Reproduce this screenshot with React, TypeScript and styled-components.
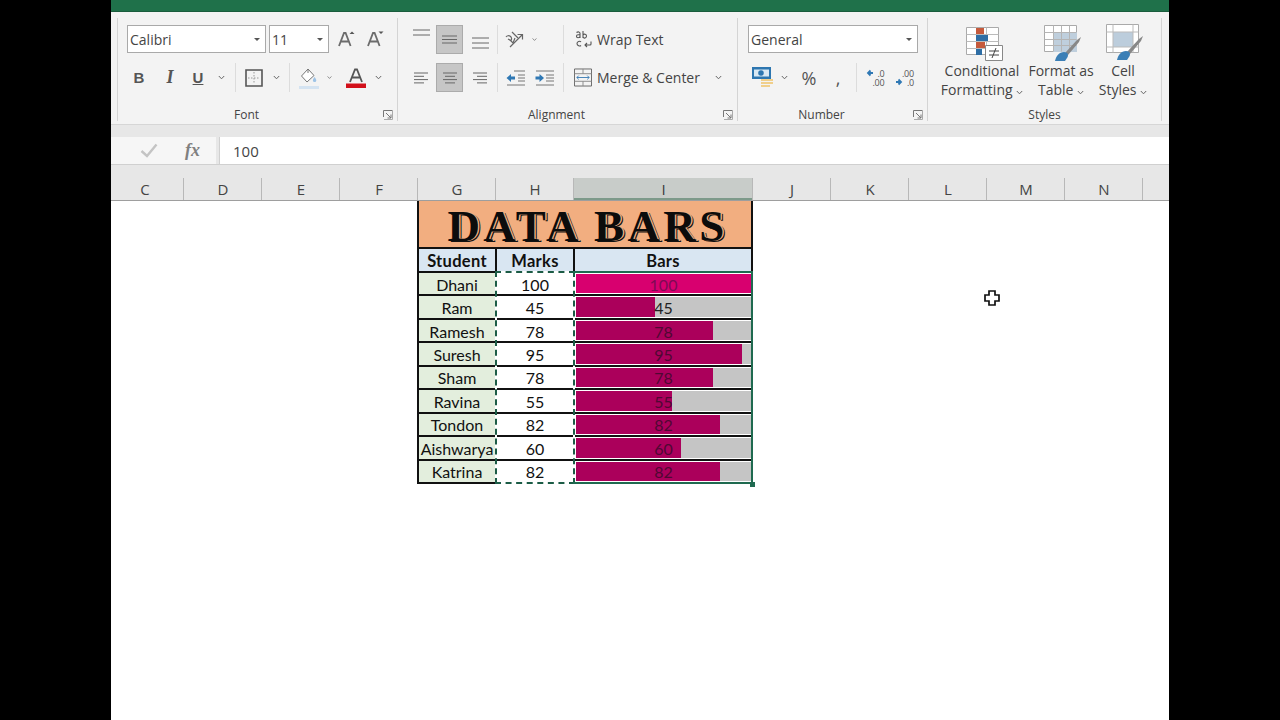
import React from "react";
import styled, { createGlobalStyle } from "styled-components";

const Global = createGlobalStyle`
  html, body { margin: 0; padding: 0; background: #000; overflow: hidden; }
  #root { width: 1280px; height: 720px; }
  * { box-sizing: border-box; }
`;
const Screen = styled.div`
  width: 1058px; height: 720px; margin-left: 111px; background: #fff;
  display: flex; flex-direction: column; overflow: hidden;
  font-family: "Open Sans", "Noto Sans", sans-serif; color: #444;
`;
const TitleBar = styled.div`
  height: 12px; flex: none; background: #1f714a; border-bottom: 1px solid #1a5c3d;
`;
const Ribbon = styled.div`
  height: 113px; flex: none; background: #f3f3f3; border-bottom: 1px solid #d6d6d6;
  display: flex; padding: 6px 0 3px 6px;
`;
const Group = styled.div<{ $w: number; $first?: boolean }>`
  width: ${(p) => p.$w}px; flex: none; display: flex; flex-direction: column;
  padding-top: 7px; border-right: 1px solid #d4d4d4;
  ${(p) => (p.$first ? "border-left: 1px solid #d4d4d4;" : "")}
`;
const Row = styled.div<{ $pl: number; $h?: number }>`
  display: flex; align-items: center; height: ${(p) => p.$h ?? 28}px;
  padding-left: ${(p) => p.$pl}px; margin-bottom: 10px;
`;
const Footer = styled.div`
  margin-top: auto; height: 14px; display: flex; align-items: center; padding-top: 1px;
`;
const GroupLabel = styled.div`
  flex: 1; text-align: center; font-size: 12px; line-height: 14px; color: #444;
`;
const Launcher = styled.div`
  width: 22px; flex: none; display: flex; justify-content: flex-end; padding-right: 4px;
`;
const Combo = styled.div<{ $w: number }>`
  width: ${(p) => p.$w}px; height: 28px; flex: none; margin-right: 3px; background: #fff;
  border: 1px solid #a9a9a9; display: flex; align-items: center; justify-content: space-between;
  padding: 0 5px 0 2px; font-size: 14px; color: #444;
`;
const Caret = styled.span`
  width: 0; height: 0; border-left: 3px solid transparent; border-right: 3px solid transparent;
  border-top: 3px solid #555;
`;
const Tool = styled.div<{ $w: number; $active?: boolean; $pt?: number; $pb?: number }>`
  width: ${(p) => p.$w}px; height: 29px; flex: none; display: flex; align-items: center; justify-content: center;
  padding-top: ${(p) => p.$pt ?? 0}px; padding-bottom: ${(p) => p.$pb ?? 0}px;
  ${(p) => (p.$active ? "background: #c6c6c6; border: 1px solid #ababab;" : "")}
`;
const Letter = styled.span<{ $i?: boolean; $u?: boolean }>`
  font-family: "Liberation Sans", sans-serif; font-size: 15px; font-weight: 700; color: #555;
  ${(p) => (p.$i ? "font-family: 'Liberation Serif', serif; font-style: italic; font-size: 18px;" : "")}
  ${(p) => (p.$u ? "text-decoration: underline;" : "")}
`;
const Sep = styled.div`
  width: 1px; height: 29px; flex: none; background: #dcdcdc;
`;
const TextBtn = styled.div`
  font-size: 14px; color: #444; white-space: nowrap; margin-left: 5px;
`;
const Symbol = styled.span`
  font-size: 18px; color: #555; line-height: 1;
`;
const DecStack = styled.div`
  display: grid; grid-template-columns: 9px 11px; row-gap: 0; align-items: center; justify-items: end;
  font-size: 9px; line-height: 9px; color: #555; letter-spacing: -.2px;
`;
const DecSpan = styled.span`
  grid-column: 1 / 3;
`;
const StyleBtn = styled.div<{ $w: number }>`
  width: ${(p) => p.$w}px; flex: none; display: flex; flex-direction: column; align-items: center;
  font-size: 14px; line-height: 19px; color: #444; text-align: center; white-space: nowrap;
`;
const StyleIcon = styled.div`
  height: 37px; padding-left: 4px; display: flex; align-items: flex-end; justify-content: center;
`;
const StyleGroupBody = styled.div`
  display: flex; padding-left: 6px; margin-top: -1px;
`;
const Spacer = styled.div`
  height: 12px; flex: none; background: #e7e7e7;
`;
const FormulaBar = styled.div`
  height: 28px; flex: none; background: #e7e7e7; display: flex;
  border-bottom: 1px solid #d0d0d0;
`;
const FormulaLeft = styled.div`
  width: 105px; flex: none; background: #f6f6f6; display: flex; align-items: center; padding-left: 2px;
`;
const FormulaInput = styled.div`
  flex: 1; margin-left: 3px; background: #fff; font-size: 15px; color: #444;
  display: flex; align-items: center; padding: 1px 0 0 13px; border-left: 1px solid #d0d0d0;
`;
const Fx = styled.span`
  font-family: "Liberation Serif", serif; font-style: italic; font-weight: 700; font-size: 18px; color: #808080;
`;
const HeaderBar = styled.div`
  height: 36px; flex: none; background: #e7e7e7; display: flex; padding-top: 13px;
  border-bottom: 1px solid #9e9e9e;
`;
const ColHead = styled.div<{ $w: number; $sel?: boolean; $pr?: number }>`
  width: ${(p) => p.$w}px; flex: none; border-right: 1px solid #b8b8b8; text-align: center;
  font-size: 15px; line-height: 22px; color: #444; height: 22px;
  padding: 0 ${(p) => p.$pr ?? 0}px 0 1px;
  ${(p) => (p.$sel ? "background: #c8ccc9; box-shadow: inset 0 -2px 0 #7d9a8a; color: #3a3a3a;" : "")}
`;
const Sheet = styled.div`
  flex: 1; padding-left: 306px; background: #fff; position: relative;
`;
const Table = styled.div`
  width: 336px; position: relative; display: grid;
  grid-template-columns: 78px 78px 178px; grid-template-rows: 48px 24px repeat(9, 23.45px);
  border-left: 2px solid #111;
  font-family: Lato, "Liberation Sans", sans-serif; font-size: 16px; color: #111;
`;
const Title = styled.div`
  grid-column: 1 / 4; background: #f2ae80; border-right: 2px solid #111; border-bottom: 2px solid #111;
  display: flex; align-items: center; justify-content: center;
  font-family: "Liberation Serif", serif; font-weight: 700; font-size: 45px; letter-spacing: 3.4px;
  color: #0c0c0c; text-shadow: 1.5px 0 0 #f2ae80, 2.5px 1px 0 #111; padding: 3px 0 0 5px;
`;
const Cell = styled.div<{ $bg?: string; $bold?: boolean }>`
  background: ${(p) => p.$bg ?? "#fff"}; border-right: 2px solid #111; border-bottom: 2px solid #111;
  display: flex; align-items: center; justify-content: center; white-space: nowrap; overflow: hidden;
  padding-top: 1px;
  ${(p) => (p.$bold ? "font-weight: 700; font-size: 16.5px; letter-spacing: .3px;" : "")}
`;
const BarCell = styled.div`
  position: relative; background: #fff; border-right: 2px solid #111; border-bottom: 2px solid #111;
  padding: 1px 0 1px 1px; display: flex;
`;
const Track = styled.div`
  flex: 1; background: #c5c5c5; position: relative; display: flex; align-items: center; justify-content: center;
  padding-top: 1px;
`;
const Fill = styled.div<{ $top?: boolean }>`
  position: absolute; left: 0; top: 0; bottom: 0; background: ${(p) => (p.$top ? "#d8006f" : "#ab005b")};
`;
const BarValue = styled.span<{ $over: boolean; $top?: boolean }>`
  position: relative; color: ${(p) => (p.$top ? "#7e0a55" : p.$over ? "#4f0833" : "#222")};
`;
const Ants = styled.div`
  position: absolute; left: 76px; top: 70px; width: 80px; height: 213px; border: 2px solid #fff;
  pointer-events: none;
  &::after { content: ""; position: absolute; inset: -2px; border: 2px dashed #1c5c46; }
`;
const Selection = styled.div`
  position: absolute; left: 154px; top: 70px; width: 180px; height: 213px; border: 2px solid #1f6a50;
  border-left: 0; pointer-events: none;
`;
const Handle = styled.div`
  position: absolute; left: 331px; top: 281px; width: 5px; height: 5px; background: #1f6a50;
`;
const Cursor = styled.svg`
  position: absolute; left: 873px; top: 89px;
`;

const Chev = () => (
  <svg width="7" height="5" viewBox="0 0 7 5"><path d="M.8 1 3.5 3.8 6.2 1" fill="none" stroke="#666" strokeWidth="1" /></svg>
);
const Launch = () => (
  <svg width="10" height="10" viewBox="0 0 10 10" fill="none" stroke="#777"><path d="M.5 7V.5H9.5M3 3l5 5M8 4.5V8H4.5" /><path d="M9.5.5v9H1" stroke="#aaa" /></svg>
);
const GrowA = ({ up }: { up: boolean }) => (
  <svg width="18" height="18" viewBox="0 0 18 18">
    <path d="M2 16 7 3h1.6l5 13M4 11.5h7.6" fill="none" stroke="#6c6c6c" strokeWidth="1.8" />
    <path d={up ? "M12.5 4 15 1.5 17.5 4Z" : "M12.5 1.5h5L15 4Z"} fill="#555" />
  </svg>
);
const Lines = ({ widths, aligns, w, step }: { widths: number[]; aligns: "l" | "c" | "r"; w: number; step: number }) => {
  const h = Math.ceil((widths.length - 1) * step + 2);
  return (
    <svg width={w} height={h} viewBox={`0 0 ${w} ${h}`}>
      {widths.map((lw, i) => {
        const x = aligns === "l" ? 0 : aligns === "r" ? w - lw : (w - lw) / 2;
        return <path key={i} d={`M${x} ${i * step + 1}h${lw}`} stroke="#666" strokeWidth="1" />;
      })}
    </svg>
  );
};
const Borders = () => (
  <svg width="18" height="18" viewBox="0 0 18 18" fill="none">
    <path d="M1 1h16v16H1z" stroke="#555" strokeWidth="1.6" />
    <path d="M9 3v12M3 9h12" stroke="#999" strokeDasharray="1.5 1.5" />
  </svg>
);
const Bucket = () => (
  <svg width="20" height="22" viewBox="0 0 20 22">
    <path d="M9 2 2.5 9 8 15l7-6.5z" fill="#fff" stroke="#777" />
    <path d="M9 2V6" stroke="#777" />
    <path d="M15.5 10c1.2 1.6 1.8 2.6 1.8 3.4a1.7 1.7 0 0 1-3.4 0c0-.8.6-1.8 1.6-3.4z" fill="#9dc3e6" />
    <path d="M0 19h20v3H0z" fill="#d4e3f1" />
  </svg>
);
const FontColor = () => (
  <svg width="20" height="20" viewBox="0 0 20 20">
    <path d="M4 14 9 1.5h2L16 14M6 9.5h8" fill="none" stroke="#555" strokeWidth="1.8" />
    <path d="M0 15.5h20V20H0z" fill="#d2101a" />
  </svg>
);
const Orient = () => (
  <svg width="20" height="18" viewBox="0 0 20 18" fill="none" stroke="#666" strokeWidth="1.2">
    <path d="M1 7a3 3 0 1 1 5 3.6L3 9M7 2l6 6M5 10l3 3 2-5" />
    <path d="M5 17 17 5M12.5 4.500H17.500V9.500" />
  </svg>
);
const Indent = ({ out }: { out: boolean }) => (
  <svg width="19" height="16" viewBox="0 0 19 16">
    <path d={out ? "M8 1h11M12 5h7M12 8h7M12 11h7M1 15h18" : "M1 1h18M11 5h8M11 8h8M11 11h8M1 15h18"} stroke="#777" />
    <path d={out ? "M.5 8 5 4v2.5h4v3H5V12z" : "M9 8 4.5 4v2.5H.5v3h4V12z"} fill="#2f78b4" />
  </svg>
);
const WrapIcon = () => (
  <svg width="17" height="17" viewBox="0 0 17 17" fill="none" stroke="#555" strokeWidth="1.1">
    <path d="M1.500 1.500c1.500-1 3.500-.8 3.500.8V7M5 3.800H3a1.500 1.500 0 0 0 0 3c1 0 2-.4 2-1.500M8 0v7M8 4c1-1.500 3.500-1 3.500 1S9 8 8 6" />
    <path d="M6 11c-1-1.200-4-.8-4 1.500S5 15.500 6 14.500M16 10.500V13a1 1 0 0 1-1 1H10M12 12l-2 2 2 2" />
  </svg>
);
const MergeIcon = () => (
  <svg width="19" height="19" viewBox="0 0 19 19" fill="none">
    <path d="M.5.500h18v18H.5z" stroke="#666" />
    <path d="M.5 5.500h18M.5 13.500h18M9.500.500v5M9.500 13.500v5" stroke="#888" />
    <path d="M3 9.500h13M5 7.500l-2 2 2 2M14 7.500l2 2-2 2" stroke="#3f7fb5" />
  </svg>
);
const Account = () => (
  <svg width="22" height="22" viewBox="0 0 22 22">
    <path d="M0 0h19v12H0z" fill="#2d76b0" />
    <path d="M2 2.500h15v7H2z" fill="#d8e8f3" />
    <circle cx="9" cy="6" r="2.800" fill="#2d76b0" />
    <path d="M9 12h12v2H9zM9 15h12v2H9zM9 18h9v2H9z" fill="#f0cf8b" />
  </svg>
);
const ArrowL = () => (
  <svg width="8" height="8" viewBox="0 0 8 8"><path d="M7 4H2M4.500 1.500 2 4l2.500 2.500" fill="none" stroke="#2f78b4" strokeWidth="1.800" /></svg>
);
const ArrowR = () => (
  <svg width="8" height="8" viewBox="0 0 8 8"><path d="M1 4h5M3.500 1.500 6 4 3.500 6.500" fill="none" stroke="#2f78b4" strokeWidth="1.800" /></svg>
);
const CondIcon = () => (
  <svg width="37" height="34" viewBox="0 0 37 34">
    <path d="M.5.500h32v27H.500z" fill="#fff" stroke="#aaa" />
    <path d="M.5 7.500h32M.5 14.500h32M.5 21.500h32M10.500.5v27M20.500.5v27" stroke="#bbb" />
    <path d="M10 1h8v6h-8z" fill="#c55a3c" />
    <path d="M10 8h12v6H10z" fill="#2f6ea5" />
    <path d="M10 15h9v6h-9z" fill="#c55a3c" />
    <path d="M10 22h6v6h-6z" fill="#2f6ea5" />
    <path d="M19.500 18.500h17v15h-17z" fill="#fff" stroke="#888" />
    <path d="M23 24h10M23 28h10M30 21l-4 10" stroke="#444" />
  </svg>
);
const Brush = () => (
  <>
    <path d="M21 28 33 15l4-3-2 5-11 13z" fill="#888" />
    <path d="M11 36c1-5 4-9 9-9 4 0 5 3 3 6l-2 3z" fill="#3b7fb6" />
  </>
);
const TableIcon = () => (
  <svg width="38" height="36" viewBox="0 0 38 36">
    <path d="M.5.500h32v26H.500z" fill="#fff" stroke="#aaa" />
    <path d="M9 7h24v20H9z" fill="#bfcfdd" />
    <path d="M.5 7.500h32M.5 14.500h32M.5 20.500h32M9.500.5v26M17.500.5v26M25.500.5v26" stroke="#b5b5b5" />
    <Brush />
  </svg>
);
const CellIcon = () => (
  <svg width="38" height="37" viewBox="0 0 38 37">
    <path d="M.5.500h32v28H.500z" fill="#fff" stroke="#aaa" />
    <path d="M7 8h20v15H7z" fill="#bccddc" />
    <path d="M.5 8h32M.5 23h32M7 .5v28M27 .5v28" stroke="#bbb" />
    <Brush />
  </svg>
);

const students: [string, number][] = [
  ["Dhani", 100], ["Ram", 45], ["Ramesh", 78], ["Suresh", 95], ["Sham", 78],
  ["Ravina", 55], ["Tondon", 82], ["Aishwarya", 60], ["Katrina", 82],
];
const columns: [string, number][] = [
  ["C", 73], ["D", 78], ["E", 78], ["F", 78], ["G", 78], ["H", 78], ["I", 179],
  ["J", 78], ["K", 78], ["L", 78], ["M", 78], ["N", 78],
];

export default function App() {
  return (
    <>
      <Global />
      <Screen>
        <TitleBar />
        <Ribbon>
          <Group $w={281} $first>
            <Row $pl={9}>
              <Combo $w={139}>Calibri<Caret /></Combo>
              <Combo $w={60}>11<Caret /></Combo>
              <Tool $w={28}><GrowA up /></Tool>
              <Tool $w={29}><GrowA up={false} /></Tool>
            </Row>
            <Row $pl={9} $h={29}>
              <Tool $w={24}><Letter>B</Letter></Tool>
              <Tool $w={38}><Letter $i>I</Letter></Tool>
              <Tool $w={18}><Letter $u>U</Letter></Tool>
              <Tool $w={28}><Chev /></Tool>
              <Sep />
              <Tool $w={35}><Borders /></Tool>
              <Tool $w={10}><Chev /></Tool>
              <Tool $w={8} />
              <Sep />
              <Tool $w={37}><Bucket /></Tool>
              <Tool $w={5}><Chev /></Tool>
              <Tool $w={14} />
              <Tool $w={20}><FontColor /></Tool>
              <Tool $w={7} />
              <Tool $w={10}><Chev /></Tool>
            </Row>
            <Footer><GroupLabel>Font</GroupLabel><Launcher><Launch /></Launcher></Footer>
          </Group>
          <Group $w={340}>
            <Row $pl={8}>
              <Tool $w={30} $pb={13}><Lines widths={[17, 17]} aligns="c" w={17} step={5} /></Tool>
              <Tool $w={27} $active><Lines widths={[15, 15, 15]} aligns="c" w={15} step={3.5} /></Tool>
              <Tool $w={34} $pt={7}><Lines widths={[17, 17, 17]} aligns="c" w={17} step={5} /></Tool>
              <Sep />
              <Tool $w={34}><Orient /></Tool>
              <Tool $w={5}><Chev /></Tool>
              <Tool $w={26} />
              <Sep />
              <Tool $w={10} />
              <Tool $w={18}><WrapIcon /></Tool>
              <TextBtn>Wrap Text</TextBtn>
            </Row>
            <Row $pl={8} $h={29}>
              <Tool $w={30}><Lines widths={[14, 10, 14, 10]} aligns="l" w={14} step={3.3} /></Tool>
              <Tool $w={27} $active><Lines widths={[14, 10, 14, 10]} aligns="c" w={14} step={3.3} /></Tool>
              <Tool $w={34}><Lines widths={[14, 10, 14, 10]} aligns="r" w={14} step={3.3} /></Tool>
              <Sep />
              <Tool $w={34}><Indent out /></Tool>
              <Tool $w={24}><Indent out={false} /></Tool>
              <Tool $w={7} />
              <Sep />
              <Tool $w={10} />
              <Tool $w={18}><MergeIcon /></Tool>
              <TextBtn>Merge &amp; Center</TextBtn>
              <Tool $w={38}><Chev /></Tool>
            </Row>
            <Footer><GroupLabel>Alignment</GroupLabel><Launcher><Launch /></Launcher></Footer>
          </Group>
          <Group $w={190}>
            <Row $pl={10}>
              <Combo $w={170}>General<Caret /></Combo>
            </Row>
            <Row $pl={12} $h={29}>
              <Tool $w={26}><Account /></Tool>
              <Tool $w={16}><Chev /></Tool>
              <Tool $w={34}><Symbol>%</Symbol></Tool>
              <Tool $w={24}><Symbol>,</Symbol></Tool>
              <Tool $w={6} />
              <Sep />
              <Tool $w={35}>
                <DecStack>
                  <ArrowL /><span>.0</span>
                  <DecSpan>.00</DecSpan>
                </DecStack>
              </Tool>
              <Tool $w={24}>
                <DecStack>
                  <DecSpan>.00</DecSpan>
                  <ArrowR /><span>.0</span>
                </DecStack>
              </Tool>
            </Row>
            <Footer><GroupLabel>Number</GroupLabel><Launcher><Launch /></Launcher></Footer>
          </Group>
          <Group $w={234}>
            <StyleGroupBody>
              <StyleBtn $w={96}>
                <StyleIcon><CondIcon /></StyleIcon>
                <span>Conditional</span>
                <span>Formatting <Chev /></span>
              </StyleBtn>
              <StyleBtn $w={62}>
                <StyleIcon><TableIcon /></StyleIcon>
                <span>Format as</span>
                <span>Table <Chev /></span>
              </StyleBtn>
              <StyleBtn $w={62}>
                <StyleIcon><CellIcon /></StyleIcon>
                <span>Cell</span>
                <span>Styles <Chev /></span>
              </StyleBtn>
            </StyleGroupBody>
            <Footer><GroupLabel>Styles</GroupLabel></Footer>
          </Group>
        </Ribbon>
        <Spacer />
        <FormulaBar>
          <FormulaLeft>
            <Tool $w={72}>
              <svg width="18" height="15" viewBox="0 0 18 15"><path d="M1.500 8 7 13 16.500 1.500" fill="none" stroke="#c4c4c4" strokeWidth="2.400" /></svg>
            </Tool>
            <Fx>fx</Fx>
          </FormulaLeft>
          <FormulaInput>100</FormulaInput>
        </FormulaBar>
        <HeaderBar>
          {columns.map(([c, w]) => <ColHead key={c} $w={w} $sel={c === "I"} $pr={c === "C" ? 5 : 0}>{c}</ColHead>)}
        </HeaderBar>
        <Sheet>
          <Table>
            <Title>DATA BARS</Title>
            <Cell $bg="#d9e6f2" $bold>Student</Cell>
            <Cell $bg="#d9e6f2" $bold>Marks</Cell>
            <Cell $bg="#d9e6f2" $bold>Bars</Cell>
            {students.map(([name, v]) => (
              <React.Fragment key={name}>
                <Cell $bg="#e3eedd">{name}</Cell>
                <Cell>{v}</Cell>
                <BarCell>
                  <Track>
                    <Fill $top={v === 100} style={{ width: `${v}%` }} />
                    <BarValue $over={v > 50} $top={v === 100}>{v}</BarValue>
                  </Track>
                </BarCell>
              </React.Fragment>
            ))}
            <Ants />
            <Selection />
            <Handle />
          </Table>
          <Cursor width="16" height="16" viewBox="0 0 16 16">
            <path d="M5 1h6v4h4v6h-4v4H5v-4H1V5h4z" fill="#fff" stroke="#111" strokeWidth="1.700" />
          </Cursor>
        </Sheet>
      </Screen>
    </>
  );
}
